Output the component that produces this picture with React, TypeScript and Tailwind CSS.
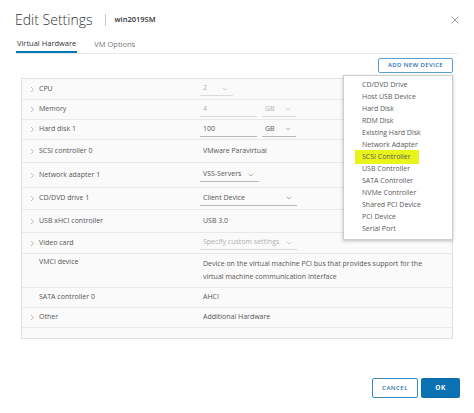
import type { ReactNode } from 'react';

function RowChevron() {
  return (
    <svg width="5" height="7" viewBox="0 0 5 7" className="shrink-0">
      <path d="M1 1 L3.5 3.5 L1 6" fill="none" stroke="#b3b3b3" strokeWidth="0.9" />
    </svg>
  );
}

function SelectChevron({ muted }: { muted?: boolean }) {
  return (
    <svg width="6" height="4" viewBox="0 0 6 4" className="shrink-0">
      <path d="M0.7 0.8 L3 3 L5.3 0.8" fill="none" stroke={muted ? '#c4c4c4' : '#9a9a9a'} strokeWidth="0.8" />
    </svg>
  );
}

function Select({ value, width, muted }: { value: string; width: string; muted?: boolean }) {
  return (
    <div
      className={`flex h-[14px] items-center justify-between border-b pl-[3px] pr-[5px] ${width} ${
        muted ? 'border-[#dcdcdc] text-[#b0b0b0]' : 'border-[#b8b8b8] text-[#565656]'
      }`}
    >
      <span>{value}</span>
      <SelectChevron muted={muted} />
    </div>
  );
}

function Input({ value, width, muted }: { value: string; width: string; muted?: boolean }) {
  return (
    <div
      className={`flex h-[14px] items-center border-b pl-[3px] ${width} ${
        muted ? 'border-[#dcdcdc] text-[#b0b0b0]' : 'border-[#b8b8b8] text-[#565656]'
      }`}
    >
      {value}
    </div>
  );
}

type Row = {
  label: string;
  expand: boolean;
  height: string;
  value: ReactNode;
  top?: boolean;
};

const rows: Row[] = [
  { label: 'CPU', expand: true, height: 'h-[21px]', value: <Select value="2" width="w-[33px]" muted /> },
  {
    label: 'Memory',
    expand: true,
    height: 'h-[20px]',
    value: (
      <div className="flex items-center gap-[5px]">
        <Input value="4" width="w-[57px]" muted />
        <Select value="GB" width="w-[34px]" muted />
      </div>
    ),
  },
  {
    label: 'Hard disk 1',
    expand: true,
    height: 'h-[20px]',
    value: (
      <div className="flex items-center gap-[5px]">
        <Input value="100" width="w-[57px]" />
        <Select value="GB" width="w-[34px]" />
      </div>
    ),
  },
  { label: 'SCSI controller 0', expand: true, height: 'h-[23px]', value: <span className="pl-[3px]">VMware Paravirtual</span> },
  { label: 'Network adapter 1', expand: true, height: 'h-[25px]', value: <Select value="VSS-Servers" width="w-[59px]" /> },
  { label: 'CD/DVD drive 1', expand: true, height: 'h-[22px]', value: <Select value="Client Device" width="w-[97px]" /> },
  { label: 'USB xHCI controller', expand: true, height: 'h-[23px]', value: <span className="pl-[3px]">USB 3.0</span> },
  { label: 'Video card', expand: true, height: 'h-[21px]', value: <Select value="Specify custom settings" width="w-[97px]" muted /> },
  {
    label: 'VMCI device',
    expand: false,
    height: 'h-[34px]',
    top: true,
    value: (
      <p className="pl-[3px] leading-[13px]">
        Device on the virtual machine PCI bus that provides support for the
        <br />
        virtual machine communication interface
      </p>
    ),
  },
  { label: 'SATA controller 0', expand: false, height: 'h-[20px]', value: <span className="pl-[3px]">AHCI</span> },
  { label: 'Other', expand: true, height: 'h-[20px]', value: <span className="pl-[3px]">Additional Hardware</span> },
];

const devices = [
  'CD/DVD Drive',
  'Host USB Device',
  'Hard Disk',
  'RDM Disk',
  'Existing Hard Disk',
  'Network Adapter',
  'SCSI Controller',
  'USB Controller',
  'SATA Controller',
  'NVMe Controller',
  'Shared PCI Device',
  'PCI Device',
  'Serial Port',
];

export default function App() {
  return (
    <div className="relative h-[413px] w-[474px] overflow-hidden bg-white font-['Open_Sans',sans-serif] text-[#565656]">
      {/* header */}
      <div className="flex h-[36px] items-center pl-[15px] pr-[14px] pt-[4px]">
        <h1 className="text-[14px] font-light leading-none text-[#333]">Edit Settings</h1>
        <span className="ml-[13px] h-[12px] w-px bg-[#c8c8c8]" />
        <span className="ml-[8px] text-[7.5px] font-semibold text-[#333]">win2019SM</span>
        <button className="ml-auto flex h-[10px] w-[10px] items-center justify-center">
          <svg width="8" height="8" viewBox="0 0 8 8">
            <path d="M0.5 0.5 L7.5 7.5 M7.5 0.5 L0.5 7.5" stroke="#8a8a8a" strokeWidth="0.8" />
          </svg>
        </button>
      </div>

      {/* tabs */}
      <div className="mx-[16px] flex h-[18px] gap-[17px] border-b border-[#e8e8e8] text-[7.5px]">
        <div className="flex items-center border-b-2 border-[#0079b8] px-px text-[#333]">Virtual Hardware</div>
        <div className="flex items-center text-[#777]">VM Options</div>
      </div>

      {/* toolbar */}
      <div className="mt-[4px] flex justify-end pr-[21px]">
        <button className="flex h-[15px] w-[75px] items-center justify-center rounded-[2px] border border-[#5a9ccb] text-[6px] font-semibold tracking-[0.06em] text-[#2a72ac]">
          ADD NEW DEVICE
        </button>
      </div>

      {/* table */}
      <div className="ml-[21px] mt-[5px] w-[432px] border border-[#e0e0e0] bg-[#fafafa] text-[7px]">
        {rows.map((row) => (
          <div
            key={row.label}
            className={`flex border-b border-[#e8e8e8] ${row.height} ${row.top ? 'items-start pt-[3px]' : 'items-center'}`}
          >
            <div className="flex w-[178px] items-center gap-[4px] pl-[8px]">
              <span className="flex w-[5px] justify-center">{row.expand && <RowChevron />}</span>
              <span className="text-[#565656]">{row.label}</span>
            </div>
            <div className="flex-1">{row.value}</div>
          </div>
        ))}
        <div className="h-[10px]" />
      </div>

      {/* footer */}
      <div className="mt-[39px] flex justify-end gap-[3px] pr-[14px]">
        <button className="flex h-[20px] w-[46px] items-center justify-center rounded-[2px] border border-[#3a8ac2] text-[6px] font-semibold tracking-[0.08em] text-[#2a72ac]">
          CANCEL
        </button>
        <button className="flex h-[20px] w-[39px] items-center justify-center rounded-[2px] bg-[#0a72b3] text-[6.5px] font-bold tracking-[0.06em] text-white">
          OK
        </button>
      </div>

      {/* add device menu */}
      <div className="absolute left-[343px] top-[75px] w-[110px] border border-[#cfcfcf] bg-white pb-[4px] pt-[3px] shadow-[0_1px_3px_rgba(0,0,0,0.25)]">
        {devices.map((d) => (
          <div key={d} className="flex h-[12px] items-center pl-[18px] text-[7px] text-[#5a5a5a]">
            {d === 'SCSI Controller' ? (
              <span className="-ml-[7px] bg-[#e8f41c] py-[2px] pl-[7px] pr-[8px]">{d}</span>
            ) : (
              d
            )}
          </div>
        ))}
      </div>
    </div>
  );
}
